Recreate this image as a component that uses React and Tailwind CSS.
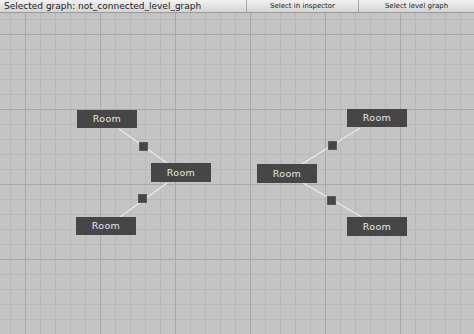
import React from 'react';

const rooms = [
  { x: 77, y: 97, w: 60, h: 18 },
  { x: 151, y: 150, w: 60, h: 19 },
  { x: 76, y: 204, w: 60, h: 18 },
  { x: 347, y: 96, w: 60, h: 18 },
  { x: 257, y: 151, w: 60, h: 19 },
  { x: 347, y: 204, w: 60, h: 19 },
];

const edges = [
  { x1: 119, y1: 116, x2: 167, y2: 150 },
  { x1: 167, y1: 170, x2: 120, y2: 204 },
  { x1: 360, y1: 115, x2: 302, y2: 151 },
  { x1: 303, y1: 170, x2: 362, y2: 204 },
];

const doors = [
  { x: 139, y: 129 },
  { x: 138, y: 181 },
  { x: 328, y: 128 },
  { x: 327, y: 183 },
];

// Graph canvas grid plus connections
const GraphCanvas = () => (
  <svg className="absolute inset-0" width="474" height="321">
    <defs>
      <pattern id="minor" x="10" y="6" width="15" height="15" patternUnits="userSpaceOnUse">
        <path d="M0.5 0V15M0 0.5H15" stroke="#b9b9b9" strokeWidth="1" fill="none" />
      </pattern>
      <pattern id="major" x="25" y="21" width="75" height="75" patternUnits="userSpaceOnUse">
        <path d="M0.5 0V75M0 0.5H75" stroke="#a9a9a9" strokeWidth="1" fill="none" />
      </pattern>
    </defs>
    <rect width="474" height="321" fill="#c4c4c4" />
    <rect width="474" height="321" fill="url(#minor)" />
    <rect width="474" height="321" fill="url(#major)" />
    {edges.map((e, i) => (
      <line key={i} {...e} stroke="#ececec" strokeWidth="1.2" />
    ))}
  </svg>
);

export default function App() {
  return (
    <div className="w-[474px] h-[334px] flex flex-col overflow-hidden bg-[#c4c4c4] font-['DejaVu_Sans',sans-serif]">
      <div className="h-[13px] flex items-stretch bg-gradient-to-b from-[#f2f2f2] to-[#d4d4d4] border-b border-[#9a9a9a] text-[#1c1c1c]">
        <div className="flex-1 pl-[4px] text-[9px] leading-[12px]">Selected graph: not_connected_level_graph</div>
        <div className="w-[112px] border-l border-[#a8a8a8] text-[7px] leading-[12px] text-center text-[#222]">Select in inspector</div>
        <div className="w-[116px] border-l border-[#a8a8a8] text-[7px] leading-[12px] text-center text-[#222]">Select level graph</div>
      </div>
      <div className="relative flex-1">
        <GraphCanvas />
        {doors.map((d, i) => (
          <div
            key={i}
            className="absolute w-[9px] h-[9px] bg-[#464646] border border-[#5a5a5a]"
            style={{ left: d.x, top: d.y }}
          />
        ))}
        {rooms.map((r, i) => (
          <div
            key={i}
            className="absolute bg-[#464646] flex items-center justify-center pt-px text-[#e6e6e6] text-[9.5px] tracking-[0.3px]"
            style={{ left: r.x, top: r.y, width: r.w, height: r.h }}
          >
            Room
          </div>
        ))}
      </div>
    </div>
  );
}
